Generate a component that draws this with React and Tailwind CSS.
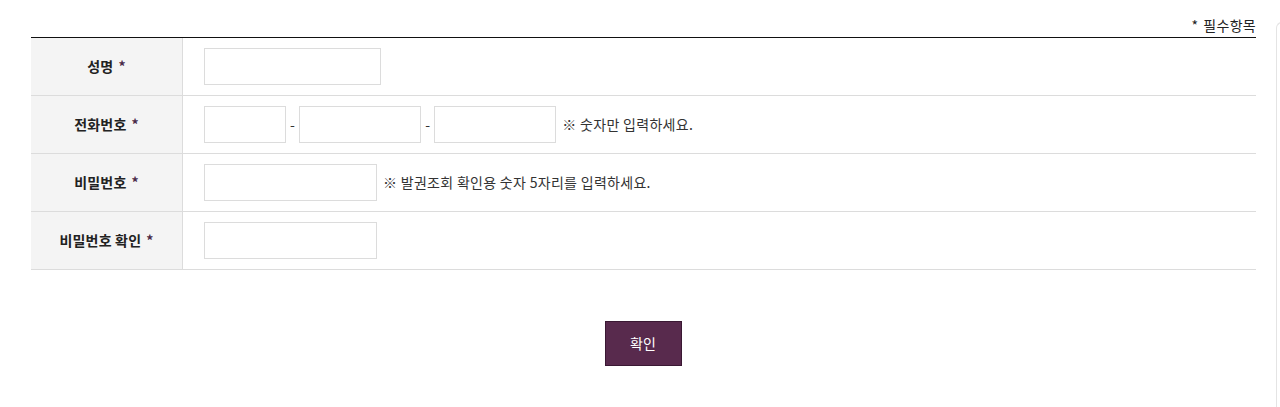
import React from 'react';

const font = { fontFamily: '"Noto Sans CJK KR", "Noto Sans", sans-serif' };

const Label = ({ children }) => (
  <div className="w-[152px] shrink-0 bg-[#f4f4f4] border-r border-[#dcdcdc] flex items-center justify-center text-[14px] font-bold text-[#222] tracking-[0.2px]">
    {children}
    <span className="ml-[5px] text-[#4a2a48]">*</span>
  </div>
);

const Box = ({ w }) => (
  <input type="text" className={`${w} h-[37px] border border-[#dcdcdc] bg-white outline-none`} />
);

const Row = ({ label, children }) => (
  <div className="flex h-[58px] border-b border-[#dcdcdc]">
    <Label>{label}</Label>
    <div className="flex items-center pl-[21px] text-[14px] text-[#333] tracking-[0.3px]">{children}</div>
  </div>
);

export default function App() {
  return (
    <div className="relative w-[1280px] h-[407px] bg-white overflow-hidden" style={font}>
      {/* faint panel edge on the right */}
      <div className="absolute left-[1276px] top-[22px] w-[6px] h-[400px] border-l border-t border-[#e4e4e4] rounded-tl-[6px]" />

      <div className="ml-[31px] w-[1225px] pt-[15px]">
        <div className="flex justify-end text-[14px] text-[#222] leading-[21px] pb-[1px] tracking-[0.3px]">
          <span className="mr-[5px]">*</span>필수항목
        </div>
        <div className="border-t border-[#111]">
          <Row label="성명">
            <Box w="w-[177px]" />
          </Row>
          <Row label="전화번호">
            <Box w="w-[82px]" />
            <span className="mx-[4px]">-</span>
            <Box w="w-[122px]" />
            <span className="mx-[4px]">-</span>
            <Box w="w-[122px]" />
            <span className="ml-[6px]">※ 숫자만 입력하세요.</span>
          </Row>
          <Row label="비밀번호">
            <Box w="w-[173px]" />
            <span className="ml-[6px]">※ 발권조회 확인용 숫자 5자리를 입력하세요.</span>
          </Row>
          <Row label="비밀번호 확인">
            <Box w="w-[173px]" />
          </Row>
        </div>
        <div className="flex justify-center pt-[51px] pr-[1px]">
          <button className="w-[77px] h-[45px] bg-[#582a4d] border border-[#3a1833] text-white text-[14px]">
            확인
          </button>
        </div>
      </div>
    </div>
  );
}
